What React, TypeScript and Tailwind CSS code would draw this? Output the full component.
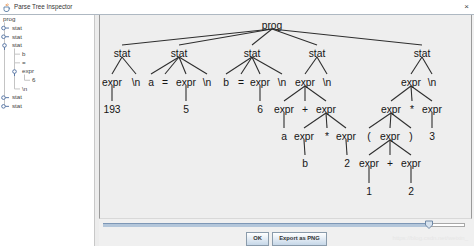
import React from "react";

type N = { l: string; x: number; c?: N[] };

const levelY = [25, 53, 82, 109, 136, 163, 191];

const tree: N = {
  l: "prog",
  x: 273,
  c: [
    { l: "stat", x: 123, c: [{ l: "expr", x: 113, c: [{ l: "193", x: 113 }] }, { l: "\\n", x: 137 }] },
    {
      l: "stat",
      x: 180,
      c: [
        { l: "a", x: 152 },
        { l: "=", x: 166 },
        { l: "expr", x: 187, c: [{ l: "5", x: 187 }] },
        { l: "\\n", x: 208 },
      ],
    },
    {
      l: "stat",
      x: 253,
      c: [
        { l: "b", x: 227 },
        { l: "=", x: 242 },
        { l: "expr", x: 261, c: [{ l: "6", x: 261 }] },
        { l: "\\n", x: 283 },
      ],
    },
    {
      l: "stat",
      x: 318,
      c: [
        {
          l: "expr",
          x: 306,
          c: [
            { l: "expr", x: 285, c: [{ l: "a", x: 285 }] },
            { l: "+", x: 306 },
            {
              l: "expr",
              x: 327,
              c: [
                { l: "expr", x: 305, c: [{ l: "b", x: 306 }] },
                { l: "*", x: 328 },
                { l: "expr", x: 347, c: [{ l: "2", x: 348 }] },
              ],
            },
          ],
        },
        { l: "\\n", x: 328 },
      ],
    },
    {
      l: "stat",
      x: 423,
      c: [
        {
          l: "expr",
          x: 412,
          c: [
            {
              l: "expr",
              x: 392,
              c: [
                { l: "(", x: 370 },
                {
                  l: "expr",
                  x: 391,
                  c: [
                    { l: "expr", x: 370, c: [{ l: "1", x: 370 }] },
                    { l: "+", x: 391 },
                    { l: "expr", x: 412, c: [{ l: "2", x: 412 }] },
                  ],
                },
                { l: ")", x: 412 },
              ],
            },
            { l: "*", x: 413 },
            { l: "expr", x: 433, c: [{ l: "3", x: 433 }] },
          ],
        },
        { l: "\\n", x: 433 },
      ],
    },
  ],
};

function collect(n: N, depth: number, lines: React.ReactNode[], texts: React.ReactNode[]) {
  const y = levelY[depth];
  texts.push(
    <text
      key={`t${texts.length}`}
      x={n.x}
      y={y + 3.6}
      textAnchor="middle"
      fontSize={10.3}
      fontFamily="'Liberation Sans', Arial, sans-serif"
      fill="#151515"
    >
      {n.l}
    </text>
  );
  (n.c || []).forEach((ch) => {
    const cy = levelY[depth + 1];
    lines.push(
      <line
        key={`l${lines.length}`}
        x1={n.x}
        y1={y + 4}
        x2={ch.x}
        y2={cy - 8}
        stroke="#2e2e2e"
        strokeWidth={1.1}
      />
    );
    collect(ch, depth + 1, lines, texts);
  });
}

function TreeCanvas() {
  const lines: React.ReactNode[] = [];
  const texts: React.ReactNode[] = [];
  collect(tree, 0, lines, texts);
  return (
    <svg className="absolute left-0 top-0" width={370} height={204} viewBox="101 15 370 204">
      {lines}
      {texts}
    </svg>
  );
}

const rows: { t: string; x: number }[] = [
  { t: "prog", x: 3 },
  { t: "stat", x: 12 },
  { t: "stat", x: 12 },
  { t: "stat", x: 12 },
  { t: "b", x: 22 },
  { t: "=", x: 22 },
  { t: "expr", x: 22 },
  { t: "6", x: 32 },
  { t: "\\n", x: 22 },
  { t: "stat", x: 12 },
  { t: "stat", x: 12 },
];

function rowY(i: number) {
  return 4.35 + i * 8.7;
}

function LeftTreeLines() {
  const blue = "#5a78a6";
  const gray = "#c4c4c4";
  const collapsed = [1, 2, 9, 10];
  return (
    <svg className="absolute left-0 top-0" width={95} height={120}>
      <line x1={4.5} y1={rowY(0) + 3} x2={4.5} y2={rowY(10)} stroke={gray} strokeWidth={1} />
      <line x1={14.5} y1={rowY(3) + 3} x2={14.5} y2={rowY(8)} stroke={gray} strokeWidth={1} />
      {[4, 5, 8].map((i) => (
        <line key={i} x1={14.5} y1={rowY(i)} x2={20} y2={rowY(i)} stroke={gray} strokeWidth={1} />
      ))}
      <line x1={24.5} y1={rowY(6) + 3} x2={24.5} y2={rowY(7)} stroke={gray} strokeWidth={1} />
      <line x1={24.5} y1={rowY(7)} x2={30} y2={rowY(7)} stroke={gray} strokeWidth={1} />
      {collapsed.map((i) => (
        <g key={i}>
          <circle cx={3.5} cy={rowY(i)} r={1.8} fill="#ffffff" stroke={blue} strokeWidth={1} />
          <line x1={5.3} y1={rowY(i)} x2={9} y2={rowY(i)} stroke={blue} strokeWidth={1} />
        </g>
      ))}
      <g>
        <circle cx={4.5} cy={rowY(3)} r={1.8} fill="#ffffff" stroke={blue} strokeWidth={1} />
        <line x1={4.5} y1={rowY(3) + 1.8} x2={4.5} y2={rowY(3) + 4.5} stroke={blue} strokeWidth={1} />
      </g>
      <g>
        <circle cx={14.5} cy={rowY(6)} r={1.8} fill="#ffffff" stroke={blue} strokeWidth={1} />
        <line x1={14.5} y1={rowY(6) + 1.8} x2={14.5} y2={rowY(6) + 4.5} stroke={blue} strokeWidth={1} />
      </g>
    </svg>
  );
}

function JavaIcon() {
  return (
    <svg width={8} height={9} viewBox="0 0 8 9">
      <path d="M1 4 h5 v2.5 a2 2 0 0 1 -2 2 h-1 a2 2 0 0 1 -2 -2 z" fill="none" stroke="#5b7fa6" strokeWidth={0.9} />
      <path d="M6 4.6 a1 1 0 0 1 0 1.8" fill="none" stroke="#5b7fa6" strokeWidth={0.8} />
      <path d="M3 1 q1 1 0 2 M4.6 0.6 q1 1 0 2.2" fill="none" stroke="#e07b2b" strokeWidth={0.8} />
    </svg>
  );
}

export default function App() {
  return (
    <div
      className="w-[474px] h-[246px] bg-white flex flex-col overflow-hidden antialiased"
      style={{ fontFamily: "'Liberation Sans', Arial, sans-serif" }}
    >
      <div className="h-[14px] flex items-center pl-[3px] pr-[5px] bg-white">
        <JavaIcon />
        <span className="ml-[3px] text-[6.3px] text-[#333333] leading-none">Parse Tree Inspector</span>
        <span className="ml-auto text-[8px] text-[#444444] leading-none">×</span>
      </div>
      <div className="h-px bg-[#aeb8c2]" />
      <div className="flex-1 flex min-h-0">
        <div className="w-[95px] bg-white border-r border-[#c8c8c8] relative">
          <LeftTreeLines />
          <div className="relative flex flex-col">
            {rows.map((r, i) => (
              <div
                key={i}
                className="h-[8.7px] flex items-center text-[6.2px] leading-none text-[#444444]"
                style={{ paddingLeft: r.x }}
              >
                {r.t}
              </div>
            ))}
          </div>
        </div>
        <div className="w-[4px] bg-[#ececec]" />
        <div className="flex-1 flex flex-col bg-[#f0f0f0]">
          <div className="h-[204px] relative bg-[#eeeeee] border-l border-r border-b border-[#9a9a9a] mr-[2px] border-b-[#d8d8d8]">
            <TreeCanvas />
          </div>
          <div className="h-[12px] relative">
            <div className="absolute left-[4px] top-[4px] w-[326px] h-[4px] bg-[#b3c6da] border-t border-[#7d97b6]" />
            <div className="absolute left-[330px] top-[4px] w-[36px] h-[4px] bg-white border border-[#a8a8a8]" />
            <svg className="absolute left-[325px] top-[1px]" width={10} height={10} viewBox="0 0 10 10">
              <path d="M1.5 1 h7 v4 l-3.5 3.5 l-3.5 -3.5 z" fill="#d6e2ee" stroke="#6f88a6" strokeWidth={1} />
            </svg>
          </div>
          <div className="flex-1 relative flex justify-center items-start pt-[1px] gap-[3px]">
            <button className="w-[23px] h-[14px] border border-[#8a9bab] bg-gradient-to-b from-[#ffffff] to-[#c6d7e8] text-[5.8px] font-bold text-[#333333] leading-none">
              OK
            </button>
            <button className="w-[55px] h-[14px] border border-[#8a9bab] bg-gradient-to-b from-[#ffffff] to-[#c6d7e8] text-[5.8px] font-bold text-[#333333] leading-none">
              Export as PNG
            </button>
            <span className="absolute right-[6px] top-[4px] text-[6px] text-[#e6e6e6] leading-none">
              https://blog.csdn.net/weixin_
            </span>
          </div>
        </div>
      </div>
    </div>
  );
}
